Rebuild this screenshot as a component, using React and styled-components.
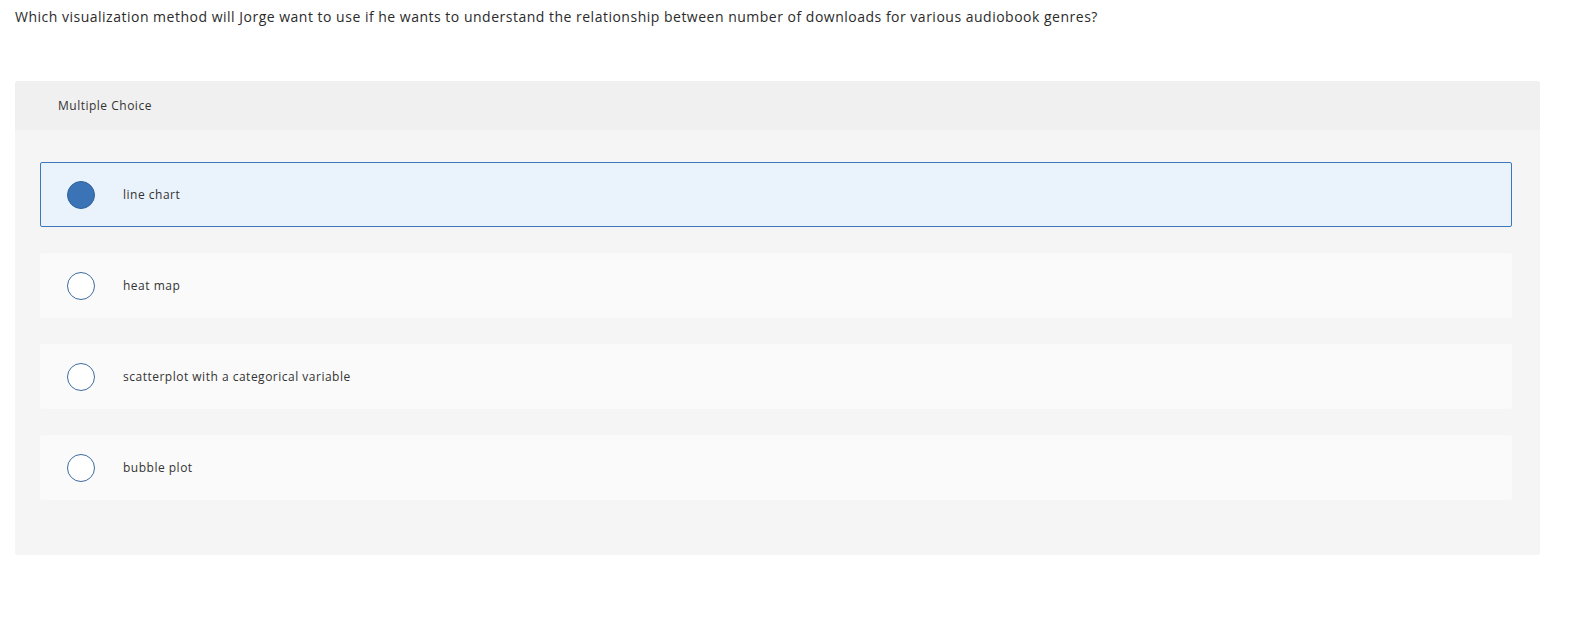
import styled, { createGlobalStyle } from "styled-components";

const GlobalStyle = createGlobalStyle`
  body {
    margin: 0;
    background: #ffffff;
    font-family: "Open Sans", "Liberation Sans", sans-serif;
    color: #2d2d2d;
    letter-spacing: 0.5px;
  }
`;

const Page = styled.div`
  padding: 9px 0 0 15px;
`;

const Question = styled.p`
  margin: 0 0 56px;
  font-size: 14px;
  line-height: 16px;
  color: #2b2b2b;
`;

const Panel = styled.div`
  width: 1525px;
  background: #f5f5f5;
  border-radius: 3px;
  overflow: hidden;
  padding-bottom: 55px;
`;

const PanelHeader = styled.div`
  height: 49px;
  background: #f0f0f0;
  display: flex;
  align-items: center;
  padding-left: 43px;
  font-size: 12px;
  color: #333;
`;

const Options = styled.div`
  display: flex;
  flex-direction: column;
  gap: 26px;
  padding: 32px 0 0 25px;
`;

const Option = styled.label`
  width: 1472px;
  height: 65px;
  box-sizing: border-box;
  display: flex;
  align-items: center;
  padding-left: 26px;
  gap: 28px;
  border-radius: 2px;
  font-size: 12px;
  color: #333;
  background: ${(p) => (p.$selected ? "#eaf2fb" : "#fafafa")};
  border: 1px solid ${(p) => (p.$selected ? "#3b77b9" : "#fafafa")};
  cursor: pointer;
`;

const Radio = styled.span`
  width: 28px;
  height: 28px;
  box-sizing: border-box;
  border-radius: 50%;
  flex: none;
  border: 1.5px solid ${(p) => (p.$selected ? "#2d639c" : "#3d6b9e")};
  background: ${(p) => (p.$selected ? "#3a74b7" : "#ffffff")};
`;

const choices = [
  "line chart",
  "heat map",
  "scatterplot with a categorical variable",
  "bubble plot",
];

export default function App() {
  return (
    <Page>
      <GlobalStyle />
      <Question>
        Which visualization method will Jorge want to use if he wants to
        understand the relationship between number of downloads for various
        audiobook genres?
      </Question>
      <Panel>
        <PanelHeader>Multiple Choice</PanelHeader>
        <Options>
          {choices.map((c, i) => (
            <Option key={c} $selected={i === 0}>
              <Radio $selected={i === 0} />
              {c}
            </Option>
          ))}
        </Options>
      </Panel>
    </Page>
  );
}
